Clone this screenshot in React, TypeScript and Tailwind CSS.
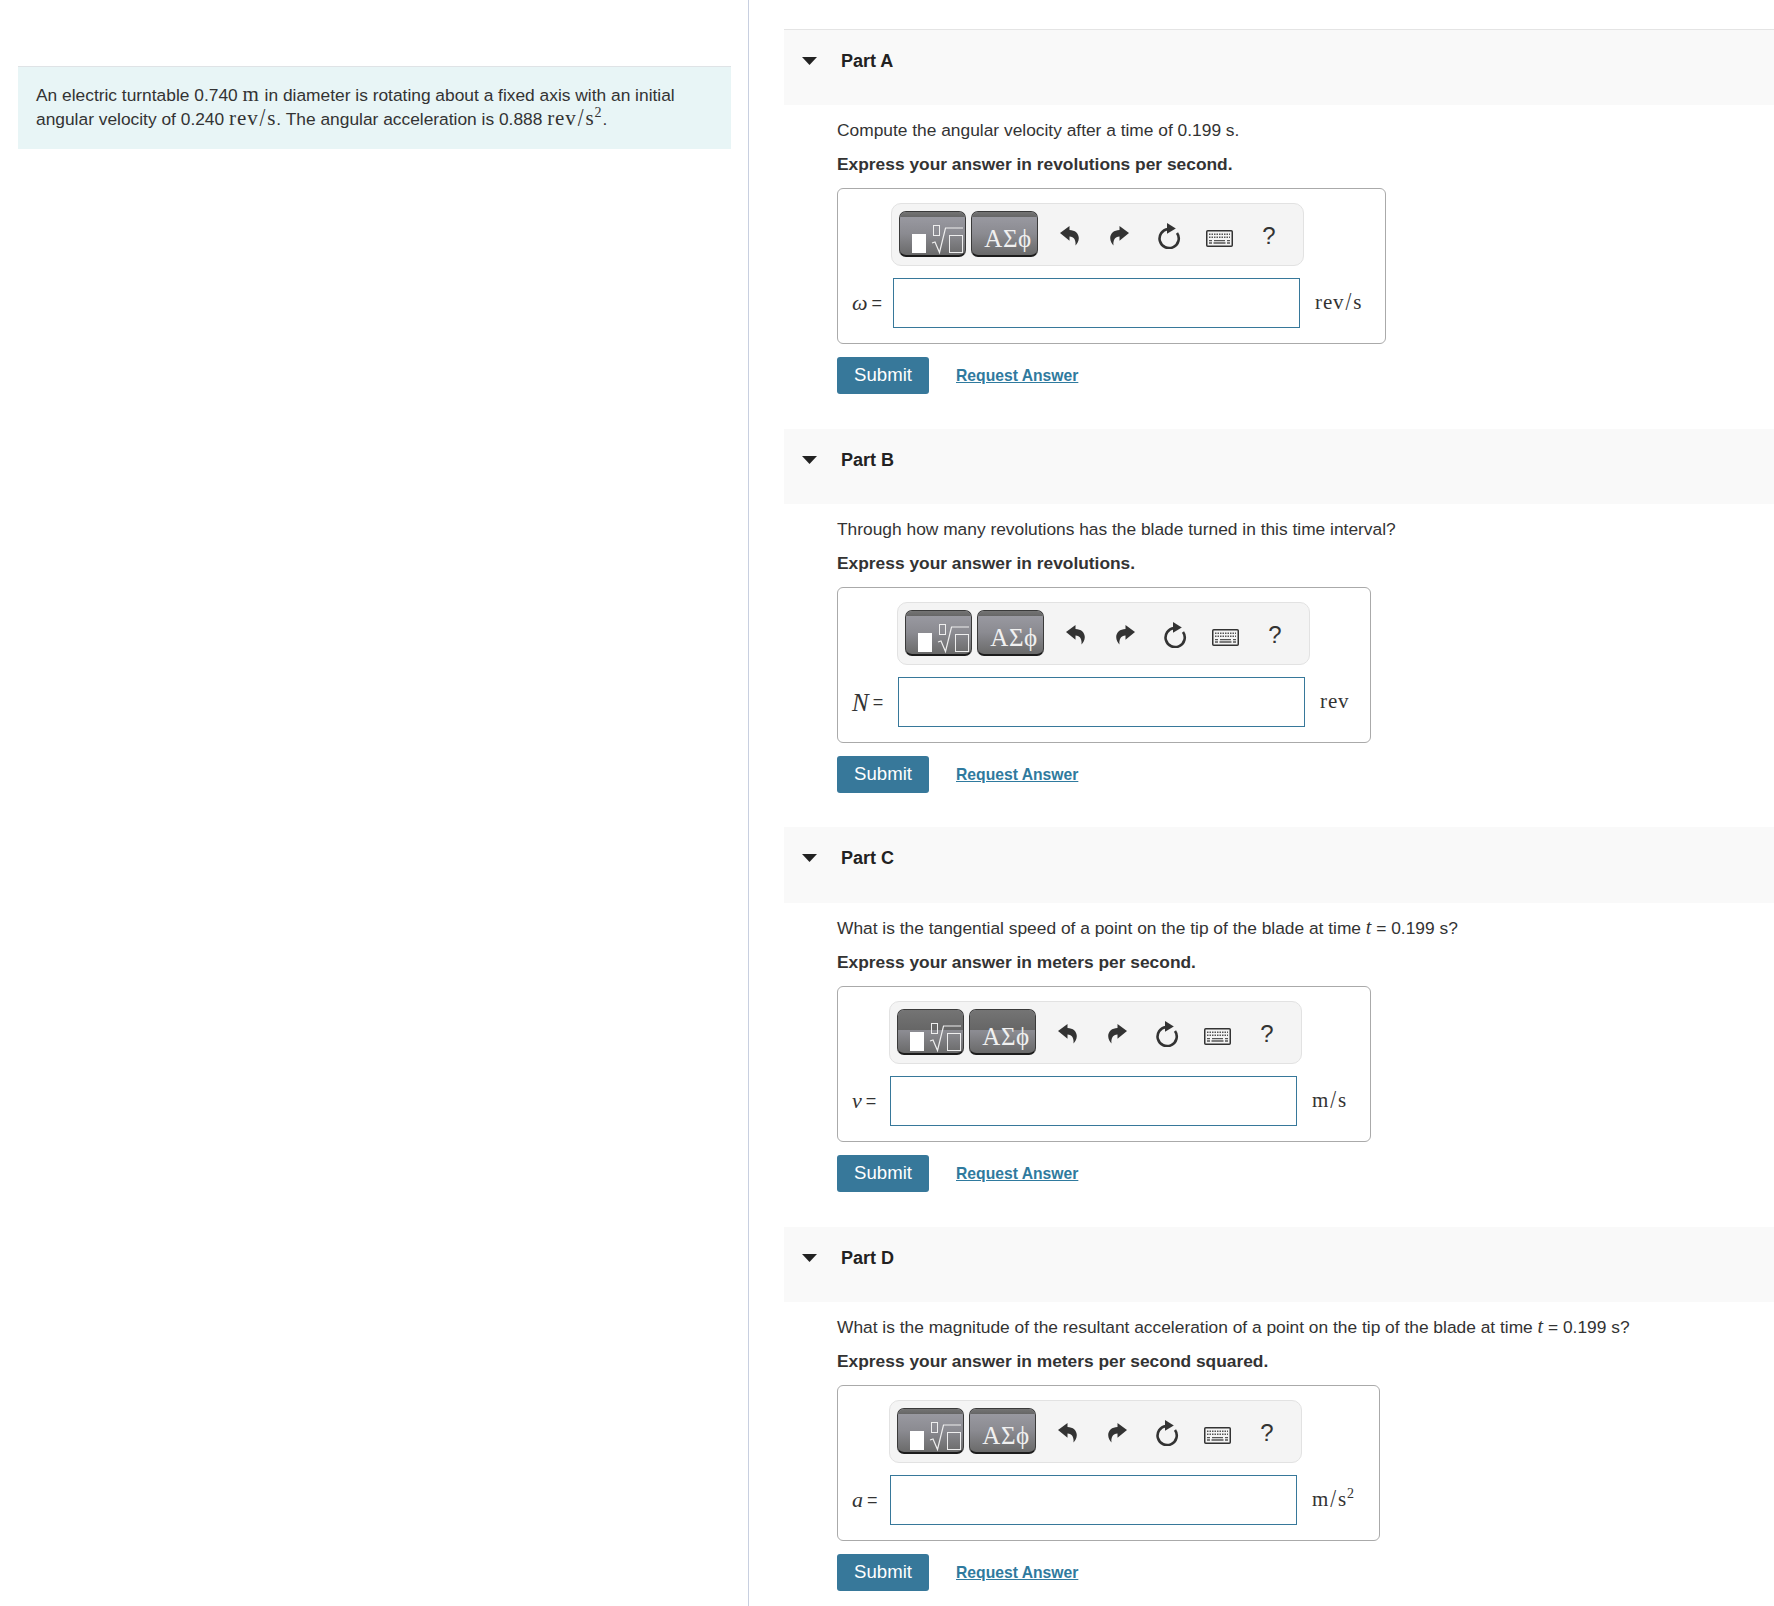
import React from "react";

const mathFont = "font-['Liberation_Serif',serif]";

const Slash = () => <span className="inline-block scale-y-[1.2] origin-center font-light mx-[1px] leading-none">/</span>;

const Unit = ({ children }: { children: React.ReactNode }) => (
  <span className={`${mathFont} text-[21px] leading-none tracking-[0.9px]`}>{children}</span>
);

const Sup2 = () => <sup className="text-[14px] relative -top-[8px] leading-none align-baseline">2</sup>;

const UndoIcon = ({ flip }: { flip?: boolean }) => (
  <svg className={`w-[19px] h-[20px] ${flip ? "-scale-x-100" : ""}`} viewBox="0 0 19 20" fill="#333">
    <path d="M0 7 9.5 0v4C15 4 18.8 7.6 18.8 12c0 3.2-1.6 5.8-3.3 7.4.6-5-1.4-8.9-6-8.9v4.2z" />
  </svg>
);

const RotateIcon = () => (
  <svg className="w-[24px] h-[26px]" viewBox="0 0 24 26" fill="none" stroke="#333">
    <path d="M11 6A9.6 9.6 0 1 0 20 10" strokeWidth="2.6" />
    <path d="M10 0 18.8 5.6 10 10.8z" fill="#333" stroke="none" />
  </svg>
);

const KeyboardIcon = () => (
  <svg className="w-[27px] h-[17px]" viewBox="0 0 27 17" fill="none">
    <rect x="0.75" y="0.75" width="25.5" height="15.5" rx="1" stroke="#333" strokeWidth="1.5" fill="#f4f4f4" />
    <path d="M3 4.2h21M3 7.2h21" stroke="#555" strokeWidth="1.4" strokeDasharray="1.5 1" />
    <path d="M3 10.6h3M21 10.6h3M3 13h3M7.5 13h12M21 13h3M8 10.6h11" stroke="#555" strokeWidth="1.3" />
  </svg>
);

const buttonShell =
  "relative w-[67px] h-[46px] rounded-[7px] border border-[#3a3a3a] border-b-2 border-b-[#1c1c1c] overflow-hidden bg-linear-to-b from-[#9d9da5] via-[#8b8b91] to-[#6a6a6a]";

const TemplateButton = ({ band }: { band: string }) => (
  <div className={buttonShell}>
    <div className={`${band} bg-linear-to-b from-[#747474] to-[#666666]`} />
    <svg className="absolute inset-0 w-full h-full" viewBox="1 1 65 43" preserveAspectRatio="none" fill="none" stroke="#eee">
      <rect x="13" y="23" width="14" height="19" fill="#fff" stroke="none" />
      <rect x="34.5" y="14.5" width="6" height="10" />
      <rect x="50.5" y="24.5" width="13" height="17" />
      <path d="M33 32l3-1 4.5 10.5L46.5 17H64" strokeWidth="1.2" />
    </svg>
  </div>
);

const SymbolButton = ({ band }: { band: string }) => (
  <div className={buttonShell}>
    <div className={`${band} bg-linear-to-b from-[#747474] to-[#666666]`} />
    <span className={`absolute inset-x-0 top-[12px] text-center pl-[7px] text-[#f0f0f0] text-[25px] leading-[30px] tracking-[0.5px] ${mathFont}`}>
      ΑΣϕ
    </span>
  </div>
);

const Toolbar = ({ offset, band }: { offset: string; band: string }) => (
  <div className={`${offset} w-[413px] h-[63px] flex items-start pt-[7px] pl-[7px] bg-[#f4f4f4] border border-[#e2e2e2] rounded-[10px]`}>
    <TemplateButton band={band} />
    <div className="ml-[5px]">
      <SymbolButton band={band} />
    </div>
    <div className="ml-[6px] h-[46px] flex items-center">
      <div className="w-[50px] flex justify-center pt-[4px]"><UndoIcon /></div>
      <div className="w-[50px] flex justify-center pt-[4px]"><UndoIcon flip /></div>
      <div className="w-[50px] flex justify-center pt-[4px]"><RotateIcon /></div>
      <div className="w-[50px] flex justify-center pt-[9px]"><KeyboardIcon /></div>
      <div className="w-[50px] flex justify-center pt-[3px] text-[24px] leading-none text-[#333]">?</div>
    </div>
  </div>
);

type PartProps = {
  name: string;
  question: React.ReactNode;
  express: string;
  symbol: string;
  symbolSize: string;
  unit: React.ReactNode;
  outer: string;
  headerHeight: string;
  boxWidth: string;
  offset: string;
  labelWidth: string;
  band: string;
};

const Part = ({ name, question, express, symbol, symbolSize, unit, outer, headerHeight, boxWidth, offset, labelWidth, band }: PartProps) => (
  <section className={outer}>
    <div className={`${headerHeight} bg-[#f9f9f9] flex items-start pt-[19px] pl-[18px]`}>
      <svg className="w-[15px] h-[8px] mt-[8px]" viewBox="0 0 15 8" fill="#222">
        <path d="M0 0h15L7.5 8z" />
      </svg>
      <h2 className="ml-[24px] text-[18px] leading-[24px] font-bold text-[#222]">{name}</h2>
    </div>
    <div className="pl-[53px]">
      <p className="mt-[12.5px] leading-[24px]">{question}</p>
      <p className="mt-[10px] leading-[24px] font-bold">{express}</p>
      <div className={`${boxWidth} mt-[12.5px] h-[156px] border border-[#aaaaaa] rounded-[6px] pt-[14px]`}>
        <Toolbar offset={offset} band={band} />
        <div className="mt-[12px] flex items-center">
          <div className={`${labelWidth} pl-[14px] flex items-center gap-[4px] text-[18px] leading-none whitespace-nowrap`}>
            <i className={`${mathFont} ${symbolSize} leading-none`}>{symbol}</i>
            <span>=</span>
          </div>
          <div className="w-[407px] h-[50px] border border-[#37789a] bg-white" />
          <div className="ml-[15px]">{unit}</div>
        </div>
      </div>
      <div className="mt-[13px] flex items-center">
        <button className="w-[92px] h-[37px] pb-[1px] rounded-[3px] bg-[#37789a] text-white text-[18.6px]">Submit</button>
        <a className="ml-[27px] text-[15.7px] font-bold underline text-[#2f7a9e]">Request Answer</a>
      </div>
    </div>
  </section>
);

export default function App() {
  return (
    <div className="w-[1774px] h-[1606px] overflow-hidden flex bg-white text-[17.37px] text-[#333] font-['Liberation_Sans',Arial,sans-serif]">
      <aside className="w-[749px] shrink-0 border-r border-[#c8cfe0] pt-[66px] pl-[18px]">
        <div className="w-[713px] h-[83px] bg-[#e8f5f6] border-t border-[#dfe3e6] pt-[16px] pl-[18px] leading-[24px]">
          <p>
            An electric turntable 0.740 <Unit>m</Unit> in diameter is rotating about a fixed axis with an initial
          </p>
          <p>
            angular velocity of 0.240 <Unit>rev<Slash />s</Unit>. The angular acceleration is 0.888 <Unit>rev<Slash />s<Sup2 /></Unit>.
          </p>
        </div>
      </aside>
      <main className="flex-1 pt-[29px] pl-[35px]">
        <div className="border-t border-[#e4e4e4]" />
        <Part
          name="Part A"
          question="Compute the angular velocity after a time of 0.199 s."
          express="Express your answer in revolutions per second."
          symbol="ω"
          symbolSize="text-[22px]"
          unit={<Unit>rev<Slash />s</Unit>}
          outer="mb-[35px]"
          headerHeight="h-[75px]"
          boxWidth="w-[549px]"
          offset="ml-[53px]"
          labelWidth="w-[55px]"
          band="h-[5px]"
        />
        <Part
          name="Part B"
          question="Through how many revolutions has the blade turned in this time interval?"
          express="Express your answer in revolutions."
          symbol="N"
          symbolSize="text-[25px]"
          unit={<Unit>rev</Unit>}
          outer="mb-[34px]"
          headerHeight="h-[75px]"
          boxWidth="w-[534px]"
          offset="ml-[59px]"
          labelWidth="w-[60px]"
          band="h-[5px]"
        />
        <Part
          name="Part C"
          question={<>What is the tangential speed of a point on the tip of the blade at time <i className={`${mathFont} text-[20px] leading-none`}>t</i> = 0.199 s?</>}
          express="Express your answer in meters per second."
          symbol="v"
          symbolSize="text-[22px]"
          unit={<Unit>m<Slash />s</Unit>}
          outer="mb-[35px]"
          headerHeight="h-[76px]"
          boxWidth="w-[534px]"
          offset="ml-[51px]"
          labelWidth="w-[52px]"
          band="h-[20px]"
        />
        <Part
          name="Part D"
          question={<>What is the magnitude of the resultant acceleration of a point on the tip of the blade at time <i className={`${mathFont} text-[20px] leading-none`}>t</i> = 0.199 s?</>}
          express="Express your answer in meters per second squared."
          symbol="a"
          symbolSize="text-[22px]"
          unit={<Unit>m<Slash />s<Sup2 /></Unit>}
          outer=""
          headerHeight="h-[75px]"
          boxWidth="w-[543px]"
          offset="ml-[51px]"
          labelWidth="w-[52px]"
          band="h-[5px]"
        />
      </main>
    </div>
  );
}
